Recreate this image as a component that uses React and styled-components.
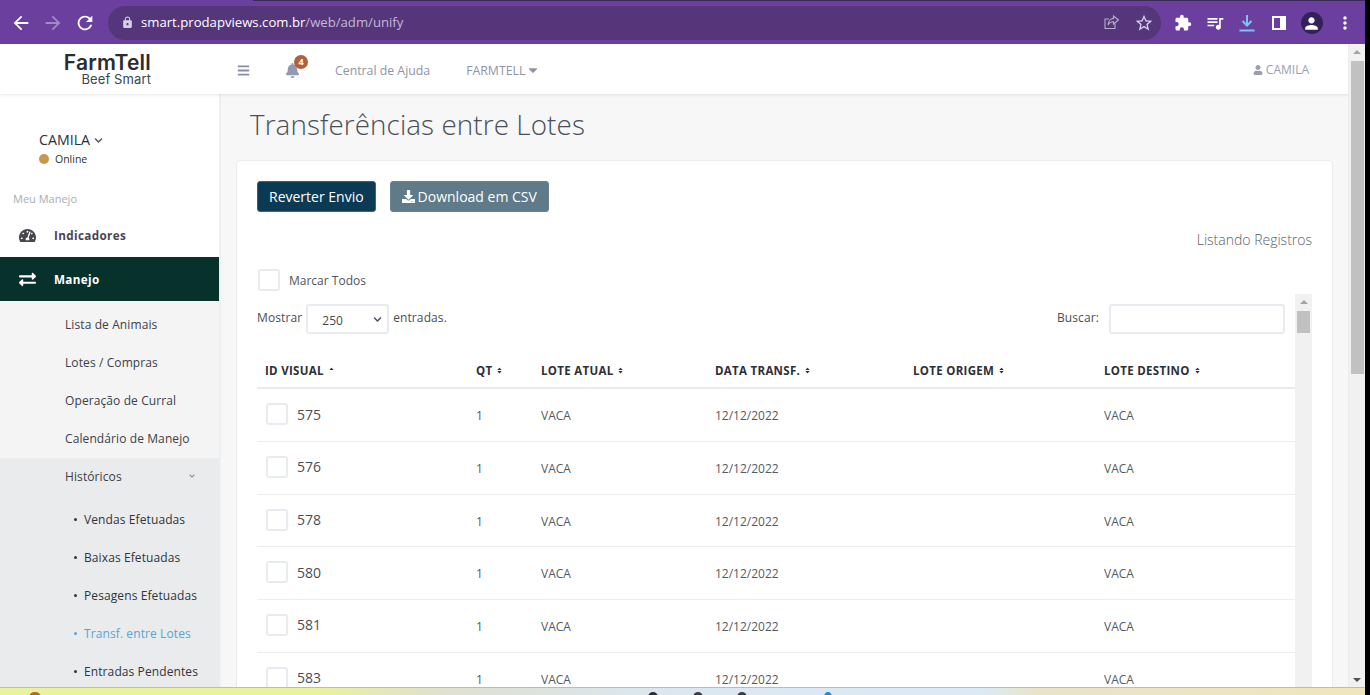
import React from "react";
import styled, { createGlobalStyle } from "styled-components";
import { FaBars, FaBell, FaUser, FaCaretDown, FaTachometerAlt, FaExchangeAlt, FaDownload, FaChevronDown, FaSortUp, FaSort } from "react-icons/fa";
import { MdLock, MdExtension, MdQueueMusic, MdPerson, MdMoreVert, MdStarBorder } from "react-icons/md";

const Global = createGlobalStyle`
  html, body { margin: 0; padding: 0; height: 100%; overflow: hidden; background: #000; }
  * { box-sizing: border-box; }
  body { font-family: "Open Sans", "Liberation Sans", sans-serif; }
`;

const Screen = styled.div`
  width: 1370px; height: 695px; display: flex; flex-direction: column; overflow: hidden; position: relative;
  padding-right: 5px; background: #000;
`;
const Browser = styled.div`
  height: 44px; flex: none; background: #6b3f9e; display: flex; align-items: center; padding: 1px 14px 0 10px;
  border-top: 1px solid #6b3f9e; position: relative;
  &::before { content: ""; position: absolute; left: 253px; right: 0; top: -1px; height: 1px; background: #3a2a55; }
`;
const NavIcon = styled.svg`width: 22px; height: 22px; fill: ${p => p.$dim ? "#a08cc0" : "#fff"}; flex: none; margin-right: ${p => p.$mr}px;`;
const Omnibox = styled.div`
  width: 1053px; height: 34px; border-radius: 17px; background: #55367a; display: flex; align-items: center;
  padding: 0 7px 0 13px; margin-left: 1px; flex: none; margin-top: -1px;
`;
const Url = styled.div`
  font: 13.15px "Open Sans", sans-serif; color: #fff; margin: 0 0 1px 7px; flex: 1; white-space: nowrap;
  span { color: #c5b8d8; }
`;
const OmniIcon = styled.span`display: flex; color: #d8cfe6; margin-left: ${p => p.$ml || 0}px;`;
const Tools = styled.div`display: flex; align-items: center; margin-left: 6px; flex: none;`;
const ToolSlot = styled.span`display: flex; align-items: center; justify-content: center; width: ${p => p.$w || 32}px; color: #fff;`;
const Avatar = styled.span`width: 22px; height: 22px; border-radius: 50%; background: #35215a; color: #fff; display: flex; align-items: center; justify-content: center;`;

const Viewport = styled.div`flex: 1; min-height: 0; display: flex; background: #f7f7f7; position: relative;`;
const PageColumn = styled.div`flex: 1; min-width: 0; display: flex; flex-direction: column;`;
const Header = styled.header`
  height: 50px; flex: none; background: #fff; display: flex; align-items: center; padding-top: 2px; box-shadow: 0 1px 3px rgba(0,0,0,.1); position: relative; z-index: 2;
`;
const LogoBox = styled.div`width: 219px; flex: none; display: flex; flex-direction: column; align-items: flex-end; padding-right: 68px; margin-top: -1px;`;
const LogoTitle = styled.div`font: 600 21px/20px Inter, sans-serif; color: #2b2b30; letter-spacing: .2px;`;
const LogoSub = styled.div`font: 400 13px/13px Inter, sans-serif; color: #38474f; letter-spacing: .1px; margin-top: 0;`;
const Burger = styled.span`color: #8a8da8; display: flex; margin-left: 18px; font-size: 13px;`;
const BellBox = styled.span`color: #9499b3; display: flex; font-size: 15px; margin-left: 35px; position: relative;`;
const Badge = styled.span`
  position: absolute; left: 9px; top: -8px; width: 14px; height: 14px; border-radius: 50%; background: #b0603a; color: #fff;
  font: 700 9px/14px "Open Sans", sans-serif; text-align: center;
`;
const HeaderLink = styled.a`font-size: 12.3px; color: #8f94a5; margin-left: ${p => p.$ml}px; display: flex; align-items: center; white-space: nowrap; gap: 1px;`;
const HeaderUser = styled.a`margin-left: auto; margin-right: 39px; font-size: 12px; color: #9a9eb0; display: flex; align-items: center; gap: 3px; margin-top: -1px;`;

const Below = styled.div`flex: 1; min-height: 0; display: flex; overflow: hidden;`;
const Side = styled.aside`width: 221px; flex: none; background: #fff; border-right: 2px solid #eceff3; overflow: hidden;`;
const Profile = styled.div`padding: 37px 0 0 39px; height: 95px;`;
const ProfileName = styled.div`font-size: 14.2px; line-height: 18px; color: #2a2f3a; display: flex; align-items: center; gap: 4px;`;
const Status = styled.div`font-size: 10.5px; line-height: 14px; color: #333; display: flex; align-items: center; gap: 6px; margin-top: 3px;`;
const Dot = styled.i`width: 10px; height: 10px; border-radius: 50%; background: #c9964f; display: block;`;
const SideLabel = styled.div`font-size: 11px; line-height: 20px; height: 24px; color: #a9adb3; padding-left: 13px; margin-bottom: 0;`;
const MainItem = styled.div`
  height: 44px; display: flex; align-items: center; background: ${p => p.$active ? "#07322b" : "transparent"};
  color: ${p => p.$active ? "#fff" : "#4a4650"}; font-size: 11.7px; font-weight: 700; letter-spacing: .35px; padding-left: 19px; gap: 18px;
  svg { font-size: 17px; flex: none; }
`;
const SubGroup = styled.div`background: #f4f4f5; padding-top: 5px;`;
const SubItem = styled.div`height: 38px; display: flex; align-items: center; padding: 0 0 2px 65px; font-size: 12px; color: #3c4048; letter-spacing: .1px;`;
const HistGroup = styled.div`background: #e9ebec; padding-bottom: 20px;`;
const HistHead = styled(SubItem)`justify-content: space-between; padding-right: 24px; margin-bottom: 5px; svg { font-size: 6px; color: #7d838a; }`;
const Leaf = styled.div`
  height: 38px; display: flex; align-items: center; padding: 0 0 2px 74px; font-size: 12px; gap: 7px; letter-spacing: .1px;
  color: ${p => p.$active ? "#58a3d6" : "#2f3540"};
  &::before { content: ""; width: 3px; height: 3px; border-radius: 50%; background: currentColor; flex: none; }
`;

const Main = styled.main`flex: 1; min-width: 0; overflow: hidden; padding: 0 15px 0 15px;`;
const Title = styled.h1`font-size: 27.8px; font-weight: 300; line-height: 38px; color: #4a4f57; margin: 11px 0 17px 14px; white-space: nowrap; letter-spacing: .1px;`;
const Card = styled.section`background: #fff; border: 1px solid #e9ecef; border-radius: 4px; padding: 20px 20px 0; height: 600px;`;
const BtnRow = styled.div`display: flex; gap: 14px;`;
const Btn = styled.button`
  height: 31px; border-radius: 3px; font: 14px "Open Sans", sans-serif; color: #fff; display: flex; align-items: center; gap: 3px; white-space: nowrap;
  background: ${p => p.$kind === "dark" ? "#0a3a54" : "#5f7a88"}; border: 1px solid ${p => p.$kind === "dark" ? "#2a6a8c" : "#6a8290"};
  padding: 0 11px; svg { font-size: 13px; }
`;
const Listing = styled.div`text-align: right; font-size: 14px; font-weight: 300; line-height: 20px; color: #5a6068; margin-top: 18px;`;
const CheckAll = styled.label`display: flex; align-items: center; gap: 9px; font-size: 12px; color: #50545c; margin: 19px 0 0 1px; height: 22px;`;
const Box = styled.span`display: block; flex: none; width: 22px; height: 22px; border: 2px solid #e8ebef; border-radius: 3px; background: #fff;`;
const TableWrap = styled.div`display: flex; margin-top: 3px; height: 420px; overflow: hidden;`;
const TableCol = styled.div`flex: 1; min-width: 0;`;
const Controls = styled.div`display: flex; align-items: center; justify-content: space-between; height: 30px; margin-top: 10px; padding-right: 10px; font-size: 12px; color: #4a4e56; letter-spacing: .1px;`;
const Group = styled.div`display: flex; align-items: center; gap: 4px;`;
const ControlLabel = styled.span`margin-bottom: 4px;`;
const FakeSelect = styled.div`
  width: 83px; height: 30px; border: 2px solid #e8ebef; border-radius: 3px; display: flex; align-items: center; justify-content: space-between;
  padding: 3px 5px 0 14px; font-size: 12px; color: #444a52; svg { font-size: 9px; color: #4a4e5a; margin-top: -3px; }
`;
const SearchBox = styled.div`width: 176px; height: 30px; border: 2px solid #e8ebef; border-radius: 3px; margin-left: 6px;`;
const Row = styled.div`
  display: grid; grid-template-columns: 211px 65px 174px 198px 191px 1fr; align-items: center;
  height: ${p => p.$head ? 49.4 : 52.7}px; border-bottom: ${p => p.$head ? "2px solid #e8ebef" : "1px solid #ecedef"};
  ${p => p.$head && "margin-top: 6px; padding-top: 14px;"}
`;
const Th = styled.div`font-size: 11.5px; font-weight: 700; color: #2c3038; padding-left: 8px; display: flex; align-items: center; gap: 4px; letter-spacing: .3px; white-space: nowrap; svg { font-size: 7px; color: #333; }`;
const Td = styled.div`font-size: 12px; color: #555a62; padding-left: 8px; padding-top: 1px;`;
const IdCell = styled.div`display: flex; align-items: center; padding-left: 9px; gap: 9px; font-size: 14px; color: #4a4e56; margin-top: -2px;`;
const InnerBar = styled.div`width: 17px; flex: none; background: #f1f1f1; display: flex; flex-direction: column; align-items: center; margin-left: 0;`;
const UpArrow = styled.i`width: 0; height: 0; border: 4px solid transparent; border-bottom: 4px solid ${p => p.$c || "#a3a3a9"}; border-top: 0; display: block; margin-top: 6px;`;
const DownArrow = styled.i`width: 0; height: 0; border: 4px solid transparent; border-top: 4px solid #505050; border-bottom: 0; display: block; margin-top: auto; margin-bottom: 5px;`;
const Thumb = styled.i`display: block; width: 13px; background: #c1c1c1; height: ${p => p.$h}px; margin-top: ${p => p.$mt}px;`;
const PageBar = styled.div`width: 17px; flex: none; background: #f1f1f1; border-left: 1px solid #ececec; display: flex; flex-direction: column; align-items: center; position: relative; z-index: 3;`;

const Desktop = styled.div`
  height: 8px; flex: none; border-top: 1px solid #bdbdae; position: relative; overflow: hidden;
  background: linear-gradient(90deg, #e9f29c 0, #e9f29c 23%, #dfe0d0 33%, #dbe6ee 47%, #dceaf6 65%, #dceaf6 72%, #e9e4c8 76%, #efe6b8 100%);
`;
const Peek = styled.i`position: absolute; top: 4px; width: ${p => p.$w}px; height: 10px; border-radius: 50% 50% 0 0; background: ${p => p.$c}; left: ${p => p.$x}px;`;

const rows = ["575", "576", "578", "580", "581", "583"];
const leaves = ["Vendas Efetuadas", "Baixas Efetuadas", "Pesagens Efetuadas", "Transf. entre Lotes", "Entradas Pendentes"];
const heads = ["QT", "LOTE ATUAL", "DATA TRANSF.", "LOTE ORIGEM", "LOTE DESTINO"];

export default function App() {
  return (
    <Screen>
      <Global />
      <Browser>
        <NavIcon viewBox="0 0 24 24" $mr={10}><path d="M20 11H7.83l5.59-5.59L12 4l-8 8 8 8 1.41-1.41L7.83 13H20v-2z" /></NavIcon>
        <NavIcon viewBox="0 0 24 24" $dim $mr={10}><path d="M12 4l-1.41 1.41L16.17 11H4v2h12.17l-5.58 5.59L12 20l8-8z" /></NavIcon>
        <NavIcon viewBox="0 0 24 24" $mr={11}><path d="M17.65 6.35C16.2 4.9 14.21 4 12 4c-4.42 0-7.99 3.58-7.99 8s3.57 8 7.99 8c3.73 0 6.84-2.55 7.73-6h-2.08c-.82 2.33-3.04 4-5.65 4-3.31 0-6-2.69-6-6s2.69-6 6-6c1.66 0 3.14.69 4.22 1.78L13 11h7V4l-2.35 2.35z" /></NavIcon>
        <Omnibox>
          <OmniIcon><MdLock size={13} /></OmniIcon>
          <Url>smart.prodapviews.com.br<span>/web/adm/unify</span></Url>
          <OmniIcon>
            <svg width="17" height="17" viewBox="0 0 17 17" fill="none" stroke="#b9aecb" strokeWidth="1.1">
              <path d="M12 9.5V14.5H2V5H6" />
              <path d="M10.5 2L15.5 6L10.5 10V7.7C8 7.7 6 8.7 5 11C5 7.5 7.2 4.7 10.5 4.4z" />
            </svg>
          </OmniIcon>
          <OmniIcon $ml={14}><MdStarBorder size={20} /></OmniIcon>
        </Omnibox>
        <Tools>
          <ToolSlot><MdExtension size={18} /></ToolSlot>
          <ToolSlot><MdQueueMusic size={20} /></ToolSlot>
          <ToolSlot>
            <svg width="18" height="18" viewBox="0 0 18 18" fill="none" stroke="#7cc4f5" strokeWidth="2">
              <path d="M9 1V11M4.5 7L9 11.5L13.5 7M1.5 16.5H16.5" />
            </svg>
          </ToolSlot>
          <ToolSlot>
            <svg width="14" height="14" viewBox="0 0 14 14"><path fillRule="evenodd" fill="#fff" d="M0 0H14V14H0zM2 2V12H8V2z" /></svg>
          </ToolSlot>
          <ToolSlot $w={33}><Avatar><MdPerson size={19} /></Avatar></ToolSlot>
          <ToolSlot $w={33}><MdMoreVert size={20} /></ToolSlot>
        </Tools>
      </Browser>
      <Viewport>
        <PageColumn>
          <Header>
            <LogoBox>
              <LogoTitle>FarmTell</LogoTitle>
              <LogoSub>Beef Smart</LogoSub>
            </LogoBox>
            <Burger><FaBars /></Burger>
            <BellBox><FaBell /><Badge>4</Badge></BellBox>
            <HeaderLink $ml={35}>Central de Ajuda</HeaderLink>
            <HeaderLink $ml={36}>FARMTELL<FaCaretDown size={14} /></HeaderLink>
            <HeaderUser><FaUser size={10} />CAMILA</HeaderUser>
          </Header>
          <Below>
            <Side>
              <Profile>
                <ProfileName>CAMILA <FaChevronDown size={9} color="#555" /></ProfileName>
                <Status><Dot />Online</Status>
              </Profile>
              <SideLabel>Meu Manejo</SideLabel>
              <MainItem><FaTachometerAlt />Indicadores</MainItem>
              <MainItem $active><FaExchangeAlt />Manejo</MainItem>
              <SubGroup>
                <SubItem>Lista de Animais</SubItem>
                <SubItem>Lotes / Compras</SubItem>
                <SubItem>Operação de Curral</SubItem>
                <SubItem>Calendário de Manejo</SubItem>
              </SubGroup>
              <HistGroup>
                <HistHead>Históricos<FaChevronDown /></HistHead>
                {leaves.map(l => <Leaf key={l} $active={l.startsWith("Transf")}>{l}</Leaf>)}
              </HistGroup>
            </Side>
            <Main>
              <Title>Transferências entre Lotes</Title>
              <Card>
                <BtnRow>
                  <Btn $kind="dark">Reverter Envio</Btn>
                  <Btn><FaDownload />Download em CSV</Btn>
                </BtnRow>
                <Listing>Listando Registros</Listing>
                <CheckAll><Box />Marcar Todos</CheckAll>
                <TableWrap>
                  <TableCol>
                    <Controls>
                      <Group><ControlLabel>Mostrar</ControlLabel><FakeSelect>250<FaChevronDown /></FakeSelect><ControlLabel>entradas.</ControlLabel></Group>
                      <Group><ControlLabel>Buscar:</ControlLabel><SearchBox /></Group>
                    </Controls>
                    <Row $head>
                      <Th>ID VISUAL <FaSortUp /></Th>
                      {heads.map(h => <Th key={h}>{h} <FaSort /></Th>)}
                    </Row>
                    {rows.map(r => (
                      <Row key={r}>
                        <IdCell><Box />{r}</IdCell>
                        <Td>1</Td>
                        <Td>VACA</Td>
                        <Td>12/12/2022</Td>
                        <Td />
                        <Td>VACA</Td>
                      </Row>
                    ))}
                  </TableCol>
                  <InnerBar>
                    <UpArrow />
                    <Thumb $h={22} $mt={7} />
                  </InnerBar>
                </TableWrap>
              </Card>
            </Main>
          </Below>
        </PageColumn>
        <PageBar>
          <UpArrow />
          <Thumb $h={313} $mt={7} />
          <DownArrow />
        </PageBar>
      </Viewport>
      <Desktop>
        <Peek $x={29} $w={12} $c="#b8671f" />
        <Peek $x={648} $w={10} $c="#2c2a3c" />
        <Peek $x={693} $w={10} $c="#3c3c48" />
        <Peek $x={737} $w={10} $c="#3c3c48" />
        <Peek $x={824} $w={8} $c="#1e88d8" />
      </Desktop>
    </Screen>
  );
}
